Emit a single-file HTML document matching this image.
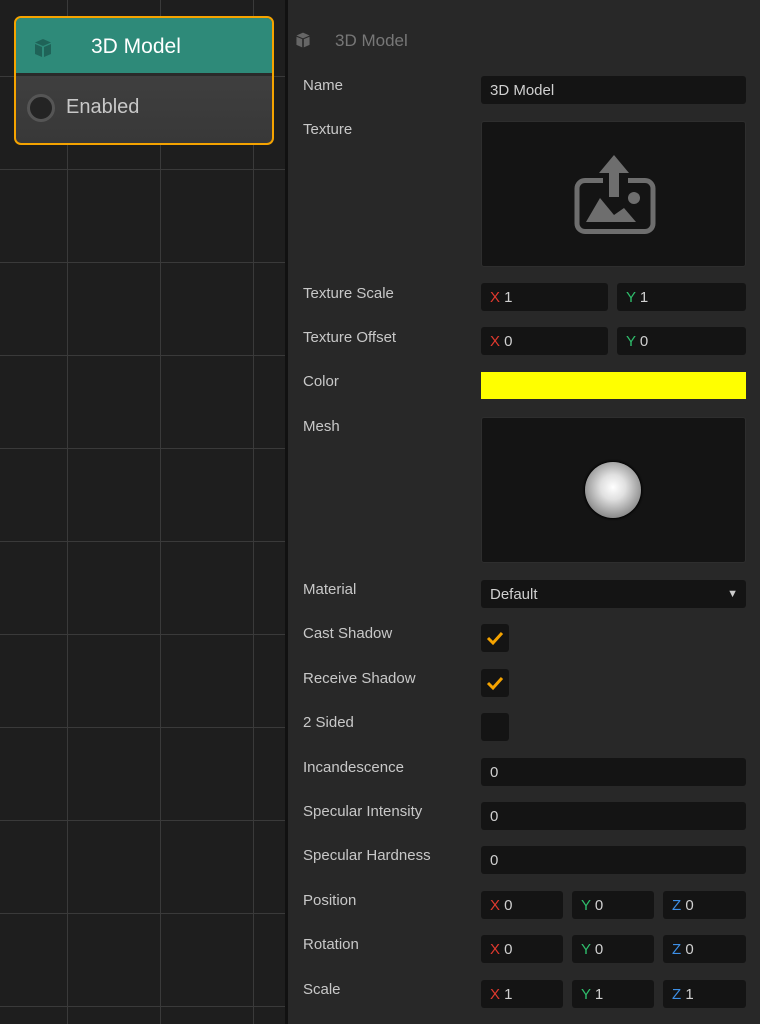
<!DOCTYPE html>
<html><head><style>
*{margin:0;padding:0;box-sizing:border-box}
body{width:760px;height:1024px;overflow:hidden;background:#1e1e1e;font-family:"Liberation Sans",sans-serif;position:relative}
.grid{position:absolute;left:0;top:0;width:285px;height:1024px;
background-image:linear-gradient(#3a3a3a 1px,transparent 1px),linear-gradient(90deg,#3a3a3a 1px,transparent 1px);
background-size:93px 93px;background-position:67px 76px}
.panel{position:absolute;left:285px;top:0;width:475px;height:1024px;background:#282828;border-left:3px solid #111}
.a{position:absolute}
.lbl{position:absolute;left:303px;font-size:15px;color:#c8c8c8}
.in{position:absolute;background:#141414;border-radius:3px;height:28px;font-size:15px;color:#d0d0d0;padding-left:9px;line-height:29px}
.x{color:#e0392e}.y{color:#2ebd6b}.z{color:#3d8fe6}
.node{position:absolute;left:14px;top:16px;width:260px;height:129px;border:2px solid #f5a300;border-radius:7px;overflow:hidden;background:linear-gradient(#454545,#383838)}
.hd{height:58px;background:#2e8a79;border-bottom:3px solid #2a2a2a;color:#fff;font-size:21px;line-height:58px;padding-left:75px}
.chk{position:absolute;left:481px;width:28px;height:28px;background:#141414;border-radius:3px}
</style></head><body>
<div class="grid"></div>
<div class="node">
<div class="hd">3D Model</div>
<svg class="a" style="left:16px;top:19px" width="22" height="22" viewBox="0 0 22 22"><path d="M11 2l8 3.5-8 3.5-8-3.5z" fill="#1f6358"/><path d="M3 7l7 3v10l-7-3z" fill="#1f6358"/><path d="M12 10l7-3v10l-7 3z" fill="#1f6358"/></svg>
<div class="a" style="left:11px;top:76px;width:28px;height:28px;border-radius:50%;background:#242424;border:3px solid #555"></div>
<div class="a" style="left:50px;top:78px;font-size:20px;color:#c8c8c8">Enabled</div>
</div>
<div class="panel"></div>
<svg class="a" style="left:294px;top:31px" width="18" height="18" viewBox="0 0 22 22"><path d="M11 2l8 3.5-8 3.5-8-3.5z" fill="#666"/><path d="M3 7l7 3v10l-7-3z" fill="#666"/><path d="M12 10l7-3v10l-7 3z" fill="#666"/></svg>
<div class="a" style="left:335px;top:31px;font-size:17px;color:#777">3D Model</div>

<div class="lbl" style="top:77px">Name</div><div class="in" style="left:481px;top:76px;width:265px">3D Model</div>
<div class="lbl" style="top:121px">Texture</div>
<div class="in" style="left:481px;top:121px;width:265px;height:146px;border:1px solid #2e2e2e"></div>
<svg class="a" style="left:570px;top:150px" width="90" height="90" viewBox="570 150 90 90">
<path d="M603 180.5H585a8 8 0 0 0-8 8v35a8 8 0 0 0 8 8h60a8 8 0 0 0 8-8v-35a8 8 0 0 0-8-8h-17" stroke="#6e6e6e" stroke-width="5" fill="none"/>
<path d="M614 155l-15 18h10v24h10v-24h10z" fill="#6e6e6e"/>
<path d="M586 222l14-24 14 17 10-7 12 14z" fill="#6e6e6e"/>
<circle cx="634" cy="198" r="6" fill="#6e6e6e"/></svg>
<div class="lbl" style="top:285px">Texture Scale</div>
<div class="in" style="left:481px;top:283px;width:127px"><span class="x">X</span> 1</div>
<div class="in" style="left:617px;top:283px;width:129px"><span class="y">Y</span> 1</div>
<div class="lbl" style="top:329px">Texture Offset</div>
<div class="in" style="left:481px;top:327px;width:127px"><span class="x">X</span> 0</div>
<div class="in" style="left:617px;top:327px;width:129px"><span class="y">Y</span> 0</div>
<div class="lbl" style="top:373px">Color</div>
<div class="a" style="left:481px;top:372px;width:265px;height:27px;background:#ffff00"></div>
<div class="lbl" style="top:418px">Mesh</div>
<div class="in" style="left:481px;top:417px;width:265px;height:146px;border:1px solid #2e2e2e"></div>
<div class="a" style="left:585px;top:462px;width:56px;height:56px;border-radius:50%;background:radial-gradient(circle at 50% 45%,#fff 0,#e0e0e0 30%,#888 75%,#333 100%);box-shadow:0 0 2px 1px #000"></div>
<div class="lbl" style="top:581px">Material</div>
<div class="in" style="left:481px;top:580px;width:265px">Default<span style="position:absolute;right:8px;top:0;font-size:11px;color:#ccc">&#9660;</span></div>
<div class="lbl" style="top:625px">Cast Shadow</div>
<div class="chk" style="top:624px"><svg width="28" height="28"><path d="M7 14l5 5 9-10" stroke="#f5a300" stroke-width="3" fill="none"/></svg></div>
<div class="lbl" style="top:670px">Receive Shadow</div>
<div class="chk" style="top:669px"><svg width="28" height="28"><path d="M7 14l5 5 9-10" stroke="#f5a300" stroke-width="3" fill="none"/></svg></div>
<div class="lbl" style="top:714px">2 Sided</div>
<div class="chk" style="top:713px"></div>
<div class="lbl" style="top:759px">Incandescence</div><div class="in" style="left:481px;top:758px;width:265px">0</div>
<div class="lbl" style="top:803px">Specular Intensity</div><div class="in" style="left:481px;top:802px;width:265px">0</div>
<div class="lbl" style="top:847px">Specular Hardness</div><div class="in" style="left:481px;top:846px;width:265px">0</div>
<div class="lbl" style="top:892px">Position</div>
<div class="in" style="left:481px;top:891px;width:82px"><span class="x">X</span> 0</div>
<div class="in" style="left:572px;top:891px;width:82px"><span class="y">Y</span> 0</div>
<div class="in" style="left:663px;top:891px;width:83px"><span class="z">Z</span> 0</div>
<div class="lbl" style="top:936px">Rotation</div>
<div class="in" style="left:481px;top:935px;width:82px"><span class="x">X</span> 0</div>
<div class="in" style="left:572px;top:935px;width:82px"><span class="y">Y</span> 0</div>
<div class="in" style="left:663px;top:935px;width:83px"><span class="z">Z</span> 0</div>
<div class="lbl" style="top:981px">Scale</div>
<div class="in" style="left:481px;top:980px;width:82px"><span class="x">X</span> 1</div>
<div class="in" style="left:572px;top:980px;width:82px"><span class="y">Y</span> 1</div>
<div class="in" style="left:663px;top:980px;width:83px"><span class="z">Z</span> 1</div>
</body></html>
